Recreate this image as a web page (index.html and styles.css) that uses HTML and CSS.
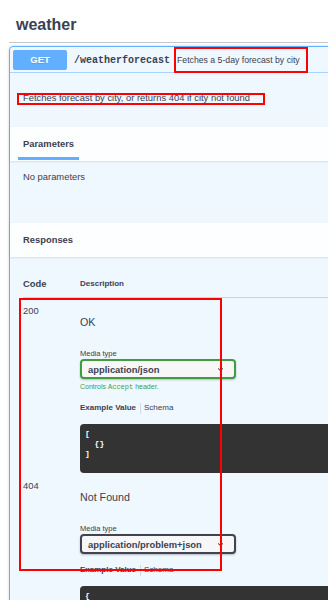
FILE: index.html
```html
<!DOCTYPE html>
<html lang="en">
<head>
    <meta charset="UTF-8">
    <meta name="viewport" content="width=device-width, initial-scale=1.0">
    <title>weather - Swagger UI</title>
    <link rel="stylesheet" href="styles.css">
</head>
<body>

    <div class="page">
        <h3 class="tag">weather</h3>

        <!-- Operation GET /weatherforecast -->
        <div class="opblock">
            <div class="summary">
                <span class="method">GET</span>
                <span class="path">/weatherforecast</span>
                <span class="summary-desc">Fetches a 5-day forecast by city</span>
            </div>

            <div class="desc-wrap">
                <p>Fetches forecast by city, or returns 404 if city not found</p>
            </div>

            <div class="section-header">
                <div class="tab">Parameters</div>
            </div>
            <div class="params-body">No parameters</div>

            <div class="responses-header">Responses</div>
            <div class="responses-inner">
                <div class="resp-head">
                    <div class="col-code">Code</div>
                    <div class="col-desc">Description</div>
                </div>

                <div class="resp-row">
                    <div class="col-code status">200</div>
                    <div class="resp-desc">
                        <div class="resp-title">OK</div>
                        <div class="media">
                            <small class="media-label">Media type</small>
                            <div class="select accept">
                                <span>application/json</span>
                                <svg class="chevron" viewBox="0 0 20 20"><path d="M13.4 7.9a.7.7 0 0 1 1 0 .7.7 0 0 1 0 1l-3.9 3.8a.7.7 0 0 1-1 0L5.6 8.9a.7.7 0 0 1 0-1 .7.7 0 0 1 1 0L10 11z"/></svg>
                            </div>
                            <small class="accept-msg">Controls <code>Accept</code> header.</small>
                        </div>
                        <div class="example-tabs">
                            <span class="tab-active">Example Value</span>
                            <span class="tab-sep"></span>
                            <span>Schema</span>
                        </div>
                        <div class="code-block">[
  {}
]</div>
                    </div>
                </div>

                <div class="resp-row">
                    <div class="col-code status">404</div>
                    <div class="resp-desc">
                        <div class="resp-title">Not Found</div>
                        <div class="media">
                            <small class="media-label">Media type</small>
                            <div class="select">
                                <span>application/problem+json</span>
                                <svg class="chevron" viewBox="0 0 20 20"><path d="M13.4 7.9a.7.7 0 0 1 1 0 .7.7 0 0 1 0 1l-3.9 3.8a.7.7 0 0 1-1 0L5.6 8.9a.7.7 0 0 1 0-1 .7.7 0 0 1 1 0L10 11z"/></svg>
                            </div>
                        </div>
                        <div class="example-tabs">
                            <span class="tab-active">Example Value</span>
                            <span class="tab-sep"></span>
                            <span>Schema</span>
                        </div>
                        <div class="code-block">{
  "type": "string",
  "title": "string",
  "status": 0
}</div>
                    </div>
                </div>
            </div>
        </div>
    </div>

    <!-- annotation boxes -->
    <div class="mark mark-summary"></div>
    <div class="mark mark-desc"></div>
    <div class="mark mark-responses"></div>

</body>
</html>
```

FILE: styles.css
```css
/* Page */
html, body {
    margin: 0;
    overflow: hidden;
}
body {
    position: relative;
    font-family: "Liberation Sans", Arial, sans-serif;
    color: #3b4151;
    background-color: #fff;
}
.page {
    width: 520px;
    padding-left: 9px;
}

/* Tag title */
.tag {
    margin: 0;
    padding: 15px 7px 7px;
    font-size: 16px;
    line-height: 20px;
    font-weight: bold;
    border-bottom: 1px solid rgba(59, 65, 81, 0.3);
}

/* Operation block */
.opblock {
    margin-top: 3px;
    border: 1px solid #61affe;
    border-radius: 4px;
    background-color: rgba(97, 175, 254, 0.1);
    box-shadow: 0 0 3px rgba(0, 0, 0, 0.19);
}
.summary {
    display: flex;
    align-items: center;
    padding: 3px 3px 2px;
    border-bottom: 1px solid rgba(97, 175, 254, 0.5);
}
.method {
    width: 54px;
    height: 20px;
    line-height: 20px;
    text-align: center;
    background-color: #61affe;
    color: #fff;
    font-size: 9.4px;
    font-weight: bold;
    border-radius: 2px;
    text-shadow: 0 1px 0 rgba(0, 0, 0, 0.1);
}
.path {
    margin-left: 7px;
    font-family: "Liberation Mono", monospace;
    font-size: 10px;
    font-weight: bold;
}
.summary-desc {
    margin-left: 7px;
    font-size: 8.7px;
}

.desc-wrap {
    padding: 9px 13px 13px;
}
.desc-wrap p {
    margin: 10px 0;
    font-size: 9.4px;
    line-height: 12px;
}

/* Parameters */
.section-header {
    display: flex;
    align-items: flex-start;
    height: 34px;
    padding: 0 8px;
    background-color: rgba(255, 255, 255, 0.8);
    box-shadow: 0 1px 2px rgba(0, 0, 0, 0.1);
}
.tab {
    padding: 11px 5px 7px;
    font-size: 9.4px;
    line-height: 12px;
    font-weight: bold;
    border-bottom: 3px solid #61affe;
}
.params-body {
    padding: 10px 13px 40px;
    font-size: 9.4px;
    line-height: 12px;
}

/* Responses */
.responses-header {
    padding: 0 13px;
    line-height: 34px;
    font-size: 9.4px;
    font-weight: bold;
    background-color: rgba(255, 255, 255, 0.8);
    box-shadow: 0 1px 2px rgba(0, 0, 0, 0.1);
}
.responses-inner {
    padding: 13px 13px 0;
}
.resp-head {
    display: flex;
    align-items: center;
    padding: 9px 0 8px;
    line-height: 10px;
    font-weight: bold;
    border-bottom: 1px solid rgba(59, 65, 81, 0.2);
}
.col-code {
    flex: none;
    width: 57px;
    font-size: 9.4px;
}
.col-desc {
    font-size: 8px;
}
.resp-row {
    display: flex;
    padding-top: 8px;
}
.status {
    line-height: 10px;
}
.resp-desc {
    flex: 1;
}
.resp-title {
    margin-top: 10px;
    font-size: 10.7px;
    line-height: 13px;
}
.media {
    margin-top: 20px;
}
.media-label {
    display: block;
    margin-bottom: 1px;
    font-size: 7.5px;
    line-height: 9px;
}
.select {
    box-sizing: border-box;
    display: flex;
    align-items: center;
    justify-content: space-between;
    width: 156px;
    height: 20px;
    padding: 0 8px 0 6px;
    font-size: 9.4px;
    font-weight: bold;
    background-color: #f7f7f7;
    border: 2px solid #41444e;
    border-radius: 4px;
    box-shadow: 0 1px 2px 0 rgba(0, 0, 0, 0.25);
}
.select.accept {
    border-color: #3f9e3f;
}
.chevron {
    width: 11px;
    height: 11px;
    fill: #3b4151;
}
.accept-msg {
    display: block;
    margin-top: 3px;
    font-size: 7px;
    line-height: 9px;
    color: #3f9e3f;
}
.accept-msg code {
    font-family: "Liberation Mono", monospace;
    font-size: 7px;
}
.example-tabs {
    display: flex;
    align-items: center;
    margin-top: 10px;
    font-size: 8px;
    line-height: 12px;
}
.tab-active {
    font-weight: bold;
}
.tab-sep {
    width: 1px;
    height: 11px;
    margin: 0 3px 0 4px;
    background-color: rgba(0, 0, 0, 0.12);
}
.code-block {
    margin-top: 10px;
    padding: 5px 5px 14px;
    font-family: "Liberation Mono", monospace;
    font-size: 8px;
    line-height: 10px;
    font-weight: bold;
    color: #fff;
    white-space: pre;
    background-color: #333;
    border-radius: 4px;
}

/* Red annotation boxes drawn over the page */
.mark {
    position: absolute;
    box-sizing: border-box;
    border: 2px solid #f00;
    pointer-events: none;
}
.mark-summary {
    left: 174px;
    top: 47px;
    width: 134px;
    height: 26px;
}
.mark-desc {
    left: 17px;
    top: 93px;
    width: 248px;
    height: 12px;
}
.mark-responses {
    left: 19px;
    top: 298px;
    width: 203px;
    height: 273px;
}
```
